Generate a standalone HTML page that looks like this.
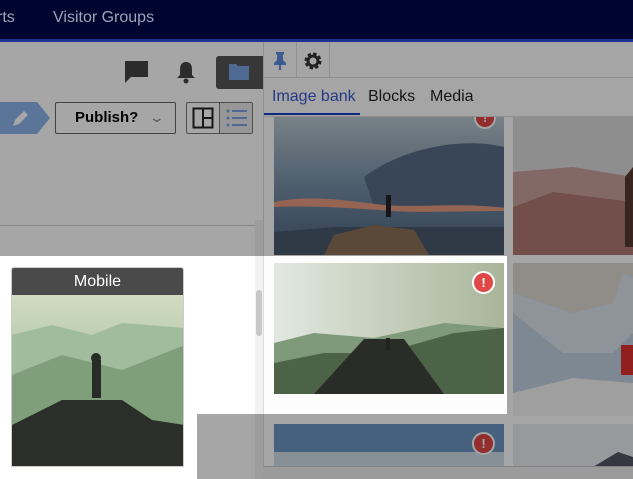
<!DOCTYPE html>
<html><head><meta charset="utf-8"><style>
*{margin:0;padding:0;box-sizing:border-box}
body{width:633px;height:479px;overflow:hidden;position:relative;background:#fff;font-family:"Liberation Sans",sans-serif}
.a{position:absolute}
.ov{position:absolute;background:rgba(0,0,0,0.35)}
</style></head><body>
<div class="a" style="left:0;top:42px;width:263px;height:437px;background:#fff"></div>
<svg class="a" style="left:124px;top:60px" width="25" height="24" viewBox="0 0 25 24"><path d="M1 1h23v16H7l-6 6z" fill="#444"/></svg>
<svg class="a" style="left:174px;top:60px" width="24" height="24" viewBox="0 0 24 24"><path d="M12 2c-4 0-6 3-6 7v6l-3 3h18l-3-3V9c0-4-2-7-6-7z" fill="#444"/><circle cx="12" cy="21" r="2.5" fill="#444"/></svg>
<div class="a" style="left:216px;top:56px;width:47px;height:33px;background:#555;border-radius:3px 0 0 3px"></div>
<svg class="a" style="left:229px;top:63px" width="20" height="17" viewBox="0 0 20 17"><path d="M0 1h7l2 2h11v14H0z" fill="#7aa4e0"/></svg>
<svg class="a" style="left:0;top:102px" width="51" height="32" viewBox="0 0 51 32"><path d="M0 0h37l13 16-13 16H0z" fill="#8cb4ec"/><path d="M13 24l2-6 9-9 4 4-9 9z" fill="#fff"/></svg>
<div class="a" style="left:55px;top:102px;width:121px;height:32px;border:1px solid #666;border-radius:2px;font-weight:bold;font-size:15px;line-height:30px;padding-left:19px;color:#000">Publish?<span style="position:absolute;left:95px;top:-1px;color:#888;font-weight:normal;font-size:14px;transform:scaleX(1.4);display:inline-block">⌄</span></div>
<div class="a" style="left:186px;top:102px;width:67px;height:32px;border:1px solid #777;border-radius:2px"></div>
<div class="a" style="left:219px;top:103px;width:33px;height:30px;background:#e8e8e8;border-left:1px solid #777"></div>
<svg class="a" style="left:192px;top:107px" width="22" height="22" viewBox="0 0 22 22"><rect x="1.5" y="1.5" width="19" height="19" fill="none" stroke="#222" stroke-width="2"/><path d="M11 1v20M11 11h9" stroke="#222" stroke-width="2"/></svg>
<svg class="a" style="left:226px;top:109px" width="22" height="18" viewBox="0 0 22 18"><g fill="#7aa4e0"><circle cx="2" cy="2" r="1.5"/><circle cx="2" cy="9" r="1.5"/><circle cx="2" cy="16" r="1.5"/><rect x="6" y="1" width="15" height="2"/><rect x="6" y="8" width="15" height="2"/><rect x="6" y="15" width="15" height="2"/></g></svg>
<div class="a" style="left:0;top:225px;width:255px;height:1px;background:#ccc"></div>
<div class="a" style="left:255px;top:220px;width:8px;height:259px;background:#f2f2f2"></div>
<div class="a" style="left:256px;top:290px;width:6px;height:46px;background:#c8c8c8;border-radius:3px"></div>
<div class="a" style="left:11px;top:267px;width:173px;height:200px;border:1px solid #ccc;overflow:hidden;border-radius:3px 3px 0 0">
<div style="height:27px;background:#4a4a4a;color:#fff;text-align:center;font-size:16px;line-height:27px">Mobile</div>
<svg width="173" height="173" viewBox="0 0 173 173" preserveAspectRatio="none"><defs><linearGradient id="m" x1="0" y1="0" x2="0" y2="1"><stop offset="0" stop-color="#d2dcc2"/><stop offset=".5" stop-color="#a8c0a4"/><stop offset="1" stop-color="#7c9a7a"/></linearGradient></defs><rect width="173" height="173" fill="url(#m)"/><path d="M0 40l40-10 40 10 30-12 63 5v140H0z" fill="#a0bc9c"/><path d="M0 80l50-20 60 15 63-25v123H0z" fill="#7f9e7a"/><path d="M0 130l50-25h60l30 20 33 5v43H0z" fill="#2c2e29"/><rect x="80" y="65" width="9" height="38" fill="#2a2a2a"/><circle cx="84" cy="63" r="5" fill="#2a2a2a"/></svg></div>
<div class="a" style="left:263px;top:42px;width:370px;height:437px;background:#fdfdfd;border-left:1px solid #ddd"></div>
<svg class="a" style="left:274px;top:117px" width="230" height="138" viewBox="0 0 230 138" preserveAspectRatio="none"><defs><linearGradient id="s1" x1="0" y1="0" x2="0" y2="1"><stop offset="0" stop-color="#b7c7cf"/><stop offset=".5" stop-color="#7890a8"/><stop offset="1" stop-color="#4a6480"/></linearGradient></defs><rect width="230" height="138" fill="url(#s1)"/><path d="M90 60c40-30 100-40 140-30v60H100z" fill="#566c88"/><path d="M0 85c40-8 80 0 110 3s80-3 120 3v3c-50 0-80 2-110 0S40 88 0 90z" fill="#e69a80"/><path d="M0 115l60-5 170 0v28H0z" fill="#4a5a6c"/><path d="M50 138l10-20 40-10 40 5 15 25z" fill="#8a7058"/><rect x="112" y="78" width="5" height="22" fill="#222"/></svg>
<svg class="a" style="left:513px;top:117px" width="120" height="138" viewBox="0 0 120 138" preserveAspectRatio="none"><rect width="120" height="138" fill="#dcdada"/><path d="M0 55l60-5 60 10v78H0z" fill="#c8a29c"/><path d="M0 90l40-15 80 10v53H0z" fill="#b07a74"/><path d="M112 60l8-10v80h-8z" fill="#5a3a2e"/></svg>
<div class="a" style="left:474px;top:107px;width:22px;height:22px;border-radius:50%;background:#e04848;border:2px solid #fff;color:#fff;font-weight:bold;font-size:13px;text-align:center;line-height:18px">!</div>
<!-- header area of panel over badge -->
<div class="a" style="left:264px;top:42px;width:369px;height:75px;background:#fdfdfd"></div>
<div class="a" style="left:263px;top:42px;width:370px;height:36px;border-bottom:1px solid #ddd"></div>
<div class="a" style="left:296px;top:42px;width:34px;height:36px;border-left:1px solid #ddd;border-right:1px solid #ddd"></div>
<svg class="a" style="left:273px;top:51px" width="14" height="20" viewBox="0 0 14 20"><path d="M3 1h8v2l-1 1v5l3 3v2H8v5H6v-5H1v-2l3-3V4L3 3z" fill="#5b8be0"/></svg>
<svg class="a" style="left:303px;top:51px" width="20" height="20" viewBox="0 0 20 20"><circle cx="10" cy="10" r="6.5" fill="none" stroke="#333" stroke-width="4" stroke-dasharray="3 2.1"/><circle cx="10" cy="10" r="5" fill="none" stroke="#333" stroke-width="3"/></svg>
<div class="a" style="left:272px;top:88px;font-size:16px;color:#3a5ad0">Image bank</div>
<div class="a" style="left:368px;top:88px;font-size:16px;color:#222">Blocks</div>
<div class="a" style="left:430px;top:88px;font-size:16px;color:#222">Media</div>
<div class="a" style="left:264px;top:113px;width:96px;height:2px;background:#1a44c8"></div>
<div class="a" style="left:263px;top:116px;width:370px;height:1px;background:#ddd"></div>
<svg class="a" style="left:274px;top:263px" width="230" height="131" viewBox="0 0 230 131" preserveAspectRatio="none"><defs><linearGradient id="s2" x1="0" y1="0" x2="1" y2="0"><stop offset="0" stop-color="#e2e8e0"/><stop offset="1" stop-color="#a8b59a"/></linearGradient></defs><rect width="230" height="131" fill="url(#s2)"/><path d="M0 80l40-10 60 5 70-15 60 5v66H0z" fill="#7e9a7a"/><path d="M0 100l50-10 60 0 70-20 50-5v66H0z" fill="#4d6348"/><path d="M40 131l50-55h40l40 55z" fill="#2a2c27"/><rect x="112" y="75" width="4" height="12" fill="#222"/></svg>
<div class="a" style="left:472px;top:271px;width:23px;height:23px;border-radius:50%;background:#e04848;border:2px solid #fff;color:#fff;font-weight:bold;font-size:13px;text-align:center;line-height:19px">!</div>
<svg class="a" style="left:513px;top:263px" width="120" height="153" viewBox="0 0 120 153" preserveAspectRatio="none"><rect width="120" height="153" fill="#ded8d2"/><path d="M0 30l60 20 40-10 10-30 10 5v130H0z" fill="#dbe3ec"/><path d="M0 50l50 40 50 0 20-20v85H0z" fill="#c2d2e2"/><path d="M0 130l60-15 60 5v35H0z" fill="#f4f4f4"/><rect x="108" y="82" width="12" height="30" fill="#e03030"/></svg>
<svg class="a" style="left:274px;top:424px" width="230" height="43" viewBox="0 0 230 43" preserveAspectRatio="none"><rect width="230" height="43" fill="#6a96c0"/><rect y="28" width="230" height="15" fill="#d0dce8"/></svg>
<div class="a" style="left:472px;top:432px;width:23px;height:23px;border-radius:50%;background:#e04848;border:2px solid #fff;color:#fff;font-weight:bold;font-size:13px;text-align:center;line-height:19px">!</div>
<svg class="a" style="left:513px;top:424px" width="120" height="43" viewBox="0 0 120 43" preserveAspectRatio="none"><rect width="120" height="43" fill="#e8ecf0"/><path d="M80 43l25-15 15 5v10z" fill="#556"/></svg>
<div class="a" style="left:263px;top:466px;width:370px;height:13px;background:#eee;border-top:1px solid #ccc"></div>
<div class="ov" style="left:0;top:0;width:633px;height:256px"></div>
<div class="ov" style="left:507px;top:256px;width:126px;height:223px"></div>
<div class="ov" style="left:197px;top:414px;width:310px;height:65px"></div>
<div class="a" style="left:0;top:0;width:633px;height:39px;background:#000530"></div>
<div class="a" style="left:0;top:39px;width:633px;height:3px;background:#1a3490"></div>
<div class="a" style="left:-3px;top:9px;font-size:16px;color:#9ea3b8">rts</div>
<div class="a" style="left:53px;top:9px;font-size:16px;color:#9ea3b8">Visitor Groups</div>
</body></html>
